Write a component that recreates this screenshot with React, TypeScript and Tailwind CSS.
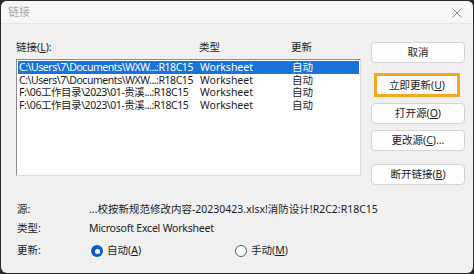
import React from "react";

const rows = [
  { path: "C:\\Users\\7\\Documents\\WXW...:R18C15", type: "Worksheet", update: "自动" },
  { path: "C:\\Users\\7\\Documents\\WXW...:R18C15", type: "Worksheet", update: "自动" },
  { path: "F:\\06工作目录\\2023\\01-贵溪...:R18C15", type: "Worksheet", update: "自动" },
  { path: "F:\\06工作目录\\2023\\01-贵溪...:R18C15", type: "Worksheet", update: "自动" },
];

const font = { fontFamily: '"Noto Sans", "Noto Sans CJK SC", sans-serif' };

const Btn = ({ children, className = "" }: { children: React.ReactNode; className?: string }) => (
  <button
    className={`w-[94px] h-[21px] bg-[#fdfdfd] border border-[#d4d4d4] rounded-[4px] text-[10.5px] text-[#1b1b1b] leading-none ${className}`}
  >
    {children}
  </button>
);

export default function App() {
  return (
    <div className="w-[474px] h-[274px] bg-[#2a2a2a] overflow-hidden" style={font}>
      <div className="w-[472px] h-[272px] ml-[1px] mt-[1px] rounded-[6px] overflow-hidden bg-[#f0f0f0] flex flex-col">
        {/* Title bar */}
        <div className="h-[23px] bg-[#f7f7f7] border-b border-[#e6e6e6] flex items-center justify-between pl-[7px] pr-[10px]">
          <span className="text-[11px] text-[#a8a8a8]">链接</span>
          <svg width="12" height="12" viewBox="0 0 12 12" className="mt-[1px]">
            <path d="M1.5 1.5 L10.5 10.5 M10.5 1.5 L1.5 10.5" stroke="#8a8a8a" strokeWidth="1" />
          </svg>
        </div>

        {/* Body */}
        <div className="flex pl-[15px] pt-[16px]">
          <div className="w-[345px]">
            <div className="flex text-[10.5px] text-[#1b1b1b] h-[16px] items-center">
              <span className="w-[183px]">链接(<span className="underline">L</span>):</span>
              <span className="w-[92px]">类型</span>
              <span>更新</span>
            </div>
            <div className="mt-[3px] h-[117px] bg-white border border-[#8c8c8c] border-b-[#dcdcdc] border-r-[#dcdcdc] pt-[1px] px-[1px]">
              {rows.map((r, i) => (
                <div
                  key={i}
                  className={`flex h-[12.5px] items-center text-[10.5px] leading-none ${
                    i === 0 ? "bg-[#1a73d9] text-white" : "text-[#1b1b1b]"
                  }`}
                >
                  <span className="w-[182px] pl-[1px] whitespace-nowrap tracking-[-0.45px]">{r.path}</span>
                  <span className="w-[92px]">{r.type}</span>
                  <span>{r.update}</span>
                </div>
              ))}
            </div>
          </div>

          <div className="ml-[10px] flex flex-col items-start pt-[2px]">
            <Btn>取消</Btn>
            <button className="mt-[10px] ml-[3px] w-[86px] h-[24px] bg-[#fdfdfd] border-[3px] border-[#f5a623] text-[10.5px] text-[#1b1b1b] leading-none">
              立即更新(<span className="underline">U</span>)
            </button>
            <Btn className="mt-[6px]">
              打开源(<span className="underline">O</span>)
            </Btn>
            <Btn className="mt-[6px]">
              更改源(<span className="underline">C</span>)...
            </Btn>
            <Btn className="mt-[13px]">
              断开链接(<span className="underline">B</span>)
            </Btn>
          </div>
        </div>

        {/* Details */}
        <div className="pl-[16px] mt-[16px] text-[10.5px] text-[#1b1b1b]">
          <div className="flex h-[18px] items-center">
            <span className="w-[72px]">源:</span>
            <span className="whitespace-nowrap">...校按新规范修改内容-20230423.xlsx!消防设计!R2C2:R18C15</span>
          </div>
          <div className="flex h-[20px] items-center">
            <span className="w-[72px]">类型:</span>
            <span className="tracking-[-0.2px]">Microsoft Excel Worksheet</span>
          </div>
          <div className="flex h-[24px] items-center">
            <span className="w-[74px]">更新:</span>
            <span className="flex items-center w-[144px]">
              <span className="w-[12px] h-[12px] rounded-full bg-[#0a5fc4] flex items-center justify-center mr-[4px]">
                <span className="w-[5px] h-[5px] rounded-full bg-white" />
              </span>
              自动(<span className="underline">A</span>)
            </span>
            <span className="flex items-center">
              <span className="w-[12px] h-[12px] rounded-full border border-[#5a5a5a] bg-white mr-[4px]" />
              手动(<span className="underline">M</span>)
            </span>
          </div>
        </div>
      </div>
    </div>
  );
}
